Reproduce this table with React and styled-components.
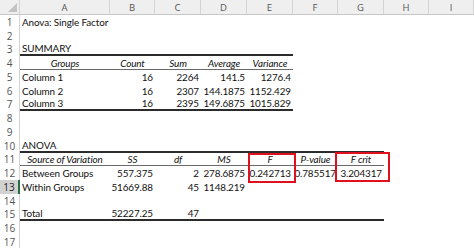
import React from "react";
import styled, { createGlobalStyle } from "styled-components";

const Global = createGlobalStyle`
  body {
    margin: 0;
    background: #fff;
    font-family: Lato, "Liberation Sans", sans-serif;
  }
`;

const COLS = ["A", "B", "C", "D", "E", "F", "G", "H", "I"];
const ROW_H = 13.75;

const Sheet = styled.div`
  display: grid;
  grid-template-columns: 20px 90px 45px 46px 46px 46px 45px 46px 45px 1fr;
  grid-template-rows: 15px repeat(17, ${ROW_H}px);
  width: 474px;
  height: 248px;
  overflow: hidden;
  font-size: 9.9px;
  color: #111;
`;

const Corner = styled.div`
  background: #efefef;
  border-right: 1px solid #d4d4d4;
  border-bottom: 1px solid #c6c6c6;
  position: relative;
  &::after {
    content: "";
    position: absolute;
    right: 2px;
    bottom: 2px;
    border-style: solid;
    border-width: 0 0 9px 9px;
    border-color: transparent transparent #c2c2c2 transparent;
  }
`;

const ColHead = styled.div`
  background: #efefef;
  border-right: 1px solid #d4d4d4;
  border-bottom: 1px solid #c6c6c6;
  color: #555;
  font-family: "Open Sans", sans-serif;
  font-size: 9.5px;
  display: flex;
  align-items: center;
  justify-content: center;
`;

const RowHead = styled.div`
  grid-column: 1;
  grid-row: ${(p) => p.$row + 1};
  background: ${(p) => (p.$active ? "#d2d2d2" : "#fff")};
  border-right: ${(p) => (p.$active ? "2px solid #217346" : "1px solid #d4d4d4")};
  color: ${(p) => (p.$active ? "#222" : "#555")};
  font-family: "Open Sans", sans-serif;
  font-size: 10px;
  display: flex;
  align-items: center;
  justify-content: center;
`;

const lines = {
  thick: "2px solid #2b2b2b",
  thin: "1px solid #6a6a6a",
};

const Cell = styled.div`
  grid-column: ${(p) => p.$col + 2};
  grid-row: ${(p) => p.$row + 1};
  display: flex;
  align-items: center;
  justify-content: ${(p) =>
    p.$align === "center" ? "center" : p.$align === "right" ? "flex-end" : "flex-start"};
  padding: 0 2px;
  white-space: nowrap;
  font-style: ${(p) => (p.$italic ? "italic" : "normal")};
  letter-spacing: -0.1px;
  border-bottom: ${(p) => (p.$bottom ? lines[p.$bottom] : "none")};
  box-sizing: border-box;
  min-width: 0;
`;

const Highlight = styled.div`
  grid-column: ${(p) => p.$col + 2};
  grid-row: 12 / span 2;
  border: 2px solid #e0101e;
  margin: ${(p) => p.$margin};
  z-index: 2;
  pointer-events: none;
`;

// [row, col, text, align, italic]
const cells = [
  [1, 0, "Anova: Single Factor"],
  [3, 0, "SUMMARY"],
  [4, 0, "Groups", "center", true],
  [4, 1, "Count", "center", true],
  [4, 2, "Sum", "center", true],
  [4, 3, "Average", "center", true],
  [4, 4, "Variance", "center", true],
  [5, 0, "Column 1"],
  [5, 1, "16", "right"],
  [5, 2, "2264", "right"],
  [5, 3, "141.5", "right"],
  [5, 4, "1276.4", "right"],
  [6, 0, "Column 2"],
  [6, 1, "16", "right"],
  [6, 2, "2307", "right"],
  [6, 3, "144.1875", "right"],
  [6, 4, "1152.429", "right"],
  [7, 0, "Column 3"],
  [7, 1, "16", "right"],
  [7, 2, "2395", "right"],
  [7, 3, "149.6875", "right"],
  [7, 4, "1015.829", "right"],
  [10, 0, "ANOVA"],
  [11, 0, "Source of Variation", "center", true],
  [11, 1, "SS", "center", true],
  [11, 2, "df", "center", true],
  [11, 3, "MS", "center", true],
  [11, 4, "F", "center", true],
  [11, 5, "P-value", "center", true],
  [11, 6, "F crit", "center", true],
  [12, 0, "Between Groups"],
  [12, 1, "557.375", "right"],
  [12, 2, "2", "right"],
  [12, 3, "278.6875", "right"],
  [12, 4, "0.242713", "right"],
  [12, 5, "0.785517", "right"],
  [12, 6, "3.204317", "right"],
  [13, 0, "Within Groups"],
  [13, 1, "51669.88", "right"],
  [13, 2, "45", "right"],
  [13, 3, "1148.219", "right"],
  [15, 0, "Total"],
  [15, 1, "52227.25", "right"],
  [15, 2, "47", "right"],
];

// table rules: row -> [last column, line]
const rules = {
  3: [4, "thick"],
  4: [4, "thin"],
  7: [4, "thick"],
  10: [6, "thick"],
  11: [6, "thin"],
  15: [6, "thick"],
};

export default function App() {
  const filled = new Set(cells.map(([r, c]) => `${r}-${c}`));
  const extra = [];
  Object.entries(rules).forEach(([r, [last]]) => {
    for (let c = 0; c <= last; c++) {
      if (!filled.has(`${r}-${c}`)) extra.push([Number(r), c, ""]);
    }
  });

  return (
    <>
      <Global />
      <Sheet>
        <Corner />
        {COLS.map((c) => (
          <ColHead key={c}>{c}</ColHead>
        ))}
        {Array.from({ length: 17 }, (_, i) => (
          <RowHead key={i} $row={i + 1} $active={i + 1 === 13}>
            {i + 1}
          </RowHead>
        ))}
        {[...cells, ...extra].map(([r, c, text, align, italic]) => {
          const rule = rules[r];
          const bottom = rule && c <= rule[0] ? rule[1] : null;
          return (
            <Cell
              key={`${r}-${c}`}
              $row={r}
              $col={c}
              $align={align}
              $italic={italic}
              $bottom={bottom}
            >
              {text}
            </Cell>
          );
        })}
        <Highlight $col={4} $margin="0 -3px -3px 1px" />
        <Highlight $col={6} $margin="-1px -6px -2px -3px" />
      </Sheet>
    </>
  );
}
